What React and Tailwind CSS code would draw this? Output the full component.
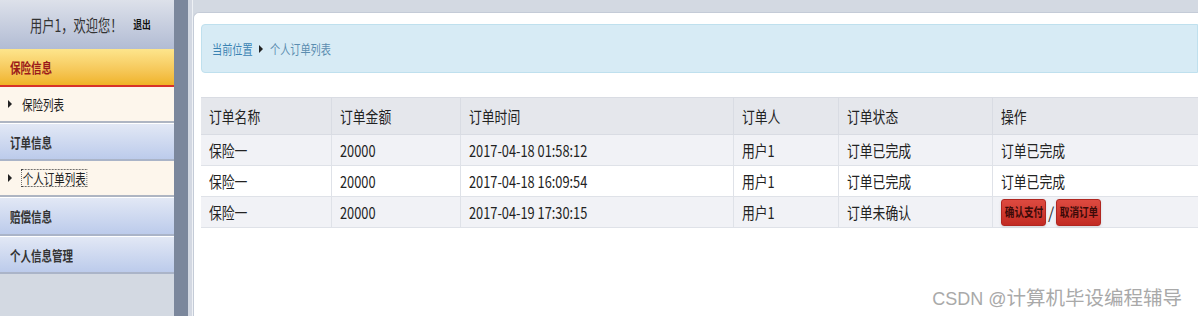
import React from "react";

const font = { fontFamily: '"Noto Sans CJK SC", "Liberation Sans", sans-serif' };

// the source screenshot is squeezed sideways, so text is narrowed to match
function T({ children, className = "" }) {
  return (
    <span className={`inline-block origin-left scale-x-[0.8] whitespace-nowrap ${className}`}>
      {children}
    </span>
  );
}

const orders = [
  { name: "保险一", amount: "20000", time: "2017-04-18 01:58:12", user: "用户1", status: "订单已完成", done: true },
  { name: "保险一", amount: "20000", time: "2017-04-18 16:09:54", user: "用户1", status: "订单已完成", done: true },
  { name: "保险一", amount: "20000", time: "2017-04-19 17:30:15", user: "用户1", status: "订单未确认", done: false },
];

const cols = "grid grid-cols-[130px_129px_273px_105px_154px_1fr]";

function Arrow() {
  return <span className="inline-block w-0 h-0 border-y-[4px] border-y-transparent border-l-[4px] border-l-[#222] mr-[10px]" />;
}

export default function App() {
  return (
    <div className="w-[1198px] h-[316px] flex overflow-hidden bg-[#d3d9e2] relative" style={font}>
      {/* Sidebar */}
      <div className="w-[174px] shrink-0 flex flex-col bg-[#d3d9e2]">
        <div className="h-[49px] flex items-center bg-gradient-to-b from-[#dde1ea] to-[#b2bcd4] pl-[30px]">
          <T className="text-[17px] leading-none text-[#333] scale-x-[0.72]">用户1，欢迎您！</T>
          <span className="ml-[-27px] inline-block scale-x-[0.8] text-[11px] font-bold text-[#111] leading-none">退出</span>
        </div>

        <div className="h-[38px] flex items-center pl-[10px] bg-gradient-to-b from-[#fde58c] to-[#f0b324] border-b-2 border-[#d8322a]">
          <T className="text-[14px] leading-none text-[#9b1a1a] font-bold scale-x-[0.75]">保险信息</T>
        </div>
        <div className="h-[36px] flex items-center pl-[8px] bg-[#fdf6ec] border-b-2 border-[#aeb5c2]">
          <Arrow />
          <T className="text-[14px] leading-none text-[#222] scale-x-[0.75]">保险列表</T>
        </div>
        <div className="h-[38px] flex items-center pl-[10px] bg-gradient-to-b from-[#e2e8f5] to-[#bccbeb] border-t border-white border-b-2 border-b-[#aab4c8]">
          <T className="text-[14px] leading-none text-[#333] font-semibold scale-x-[0.75]">订单信息</T>
        </div>
        <div className="h-[36px] flex items-center pl-[8px] bg-[#fdf6ec] border-b-2 border-[#aeb5c2]">
          <Arrow />
          <T className="text-[14px] leading-none text-[#222] scale-x-[0.75] outline outline-1 outline-dotted outline-[#444] px-[1px] py-[1px]">
            个人订单列表
          </T>
        </div>
        <div className="h-[39px] flex items-center pl-[10px] bg-gradient-to-b from-[#e2e8f5] to-[#bccbeb] border-t border-white border-b-2 border-b-[#aab4c8]">
          <T className="text-[14px] leading-none text-[#333] font-semibold scale-x-[0.75]">赔偿信息</T>
        </div>
        <div className="h-[38px] flex items-center pl-[10px] bg-gradient-to-b from-[#e2e8f5] to-[#bccbeb] border-t border-white border-b-2 border-b-[#aab4c8]">
          <T className="text-[14px] leading-none text-[#333] font-semibold scale-x-[0.75]">个人信息管理</T>
        </div>
        <div className="flex-1 bg-[#d3d9e2]" />
      </div>

      {/* Divider strips */}
      <div className="w-[14px] shrink-0 bg-[#7b879c]" />
      <div className="w-[4px] shrink-0 bg-[#d3d8e2]" />
      <div className="w-[1px] shrink-0 bg-[#eef1f5]" />

      {/* Main */}
      <div className="flex-1 pt-[12px] bg-[#d3d9e2]">
        <div className="h-full bg-white rounded-tl-[6px] border-l border-t border-[#c4cbd7] pl-[7px] pt-[11px]">
          <div className="h-[49px] bg-[#d7ebf5] border border-[#bfe0ee] rounded-l-[4px] flex items-center pl-[10px]">
            <T className="text-[13px] leading-none text-[#3b83b3] scale-x-[0.78]">当前位置</T>
            <span className="ml-[-5px] inline-block w-0 h-0 border-y-[4px] border-y-transparent border-l-[4px] border-l-[#222]" />
            <T className="ml-[7px] text-[13px] leading-none text-[#5b8db0] scale-x-[0.78]">个人订单列表</T>
          </div>

          <div className="mt-[24px] text-[#222]">
            <div className={`${cols} h-[38px] bg-[#e5e7ec] border-t border-b border-[#d9dce3]`}>
              {["订单名称", "订单金额", "订单时间", "订单人", "订单状态", "操作"].map((h, i) => (
                <div key={h} className={`flex items-center pl-[8px] ${i > 0 ? "border-l border-[#d9dce3]" : ""}`}>
                  <T className="text-[16px] leading-none">{h}</T>
                </div>
              ))}
            </div>
            {orders.map((o, r) => (
              <div
                key={r}
                className={`${cols} h-[31px] border-b border-[#dfe2e8] ${r % 2 === 1 ? "bg-white" : "bg-[#f1f2f6]"}`}
              >
                {[o.name, o.amount, o.time, o.user, o.status].map((v, i) => (
                  <div key={i} className={`flex items-center pl-[8px] ${i > 0 ? "border-l border-[#dfe2e8]" : ""}`}>
                    <T className="text-[16px] leading-none">{v}</T>
                  </div>
                ))}
                <div className="flex items-center pl-[8px] border-l border-[#dfe2e8]">
                  {o.done ? (
                    <T className="text-[16px] leading-none">订单已完成</T>
                  ) : (
                    <div className="flex items-center">
                      <button className="w-[45px] h-[27px] rounded-[3px] bg-gradient-to-b from-[#de4a40] to-[#c22a22] border border-[#b02620] shadow-sm flex items-center justify-center">
                        <span className="inline-block scale-x-[0.8] text-[12px] leading-none font-bold text-[#3a0a08] whitespace-nowrap">确认支付</span>
                      </button>
                      <span className="mx-[2px] text-[16px] leading-none text-[#333]">/</span>
                      <button className="w-[45px] h-[27px] rounded-[3px] bg-gradient-to-b from-[#de4a40] to-[#c22a22] border border-[#b02620] shadow-sm flex items-center justify-center">
                        <span className="inline-block scale-x-[0.8] text-[12px] leading-none font-bold text-[#3a0a08] whitespace-nowrap">取消订单</span>
                      </button>
                    </div>
                  )}
                </div>
              </div>
            ))}
          </div>
        </div>
      </div>

      {/* Watermark */}
      <div
        className="absolute right-[16px] bottom-[8px] text-[18px] leading-none text-[#a9a9a9] whitespace-nowrap"
        style={{ fontFamily: '"Liberation Sans", "Noto Sans CJK SC", sans-serif' }}
      >
        CSDN @<span className="text-[19.5px]">计算机毕设编程辅导</span>
      </div>
    </div>
  );
}
